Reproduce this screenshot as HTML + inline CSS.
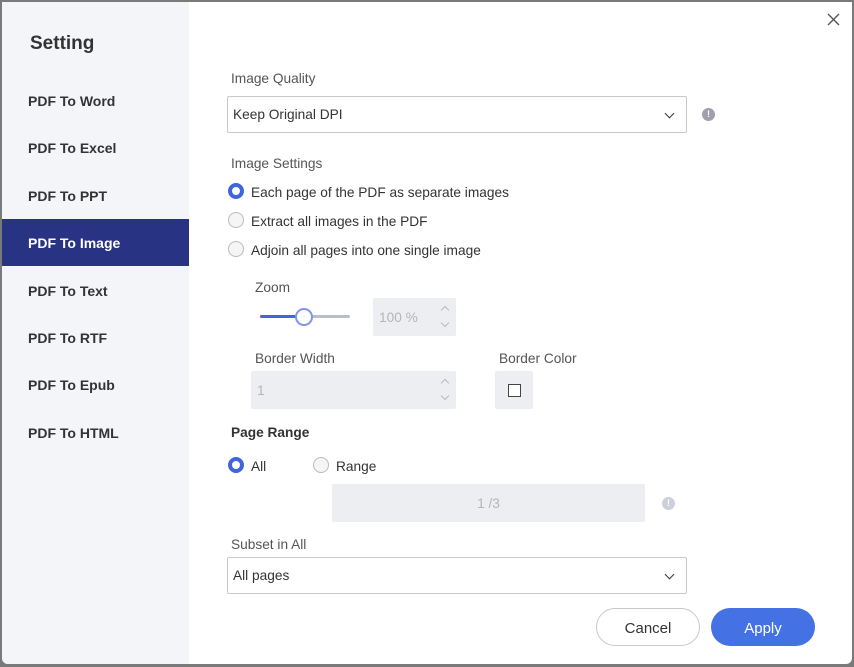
<!DOCTYPE html>
<html><head><style>
*{box-sizing:border-box;margin:0;padding:0}
body{width:854px;height:667px;background:#7a7a7a;font-family:"Liberation Sans",sans-serif;position:relative;overflow:hidden}
.win{position:absolute;left:2px;top:2px;width:850px;height:662px;background:#fff;border-radius:0 0 6px 6px;overflow:hidden}
.side{position:absolute;left:0;top:0;width:187px;height:662px;background:#f4f5f9}
.side h1{position:absolute;left:28px;top:31px;font-size:19px;font-weight:bold;color:#333}
.it{position:absolute;left:0;width:187px;height:47px;line-height:49px;padding-left:26px;font-size:14px;font-weight:bold;color:#333}
.it.on{background:#283483;color:#fff}
.a{position:absolute;font-size:13.7px;color:#333}
.lbl{color:#555}
.sel{position:absolute;border:1px solid #c9c9c9;border-radius:2px;background:#fff;font-size:13.7px;color:#333;padding-left:5px;line-height:36px}
.chev{position:absolute;right:13px;top:13px;width:7px;height:7px;border-right:1.5px solid #333;border-bottom:1.5px solid #333;transform:rotate(45deg)}
.r{position:absolute;width:16px;height:16px;border-radius:50%;border:1px solid #bbb;background:#f5f5f5}
.r.on{border:4px solid #3f66e0;background:#fff}
.box{position:absolute;background:#edeef1;border-radius:2px;color:#b5b5b5;font-size:13.7px}
.info{position:absolute;width:13px;height:13px;border-radius:50%;background:#9fa0ae;color:#fff;font-size:9px;font-weight:bold;text-align:center;line-height:13px}
.btn{position:absolute;height:38px;border-radius:19px;font-size:15px;text-align:center;line-height:40px}
.sp{position:absolute;right:8px;width:6px;height:6px;border-left:1px solid #bbb;border-top:1px solid #bbb}
</style></head><body>
<div class="win">
<div class="side">
<h1>Setting</h1>
<div class="it" style="top:75px">PDF To Word</div>
<div class="it" style="top:122px">PDF To Excel</div>
<div class="it" style="top:170px">PDF To PPT</div>
<div class="it on" style="top:217px">PDF To Image</div>
<div class="it" style="top:265px">PDF To Text</div>
<div class="it" style="top:312px">PDF To RTF</div>
<div class="it" style="top:359px">PDF To Epub</div>
<div class="it" style="top:407px">PDF To HTML</div>
</div>
<svg style="position:absolute;left:825px;top:11px" width="13" height="13" viewBox="0 0 13 13"><path d="M1 1L12 12M12 1L1 12" stroke="#555" stroke-width="1.4"/></svg>
<div class="a lbl" style="left:229px;top:69px">Image Quality</div>
<div class="sel" style="left:225px;top:94px;width:460px;height:37px">Keep Original DPI<div class="chev"></div></div>
<div class="info" style="left:700px;top:106px">!</div>
<div class="a lbl" style="left:229px;top:154px">Image Settings</div>
<div class="r on" style="left:226px;top:181px"></div><div class="a" style="left:249px;top:183px">Each page of the PDF as separate images</div>
<div class="r" style="left:226px;top:210px"></div><div class="a" style="left:249px;top:212px">Extract all images in the PDF</div>
<div class="r" style="left:226px;top:239px"></div><div class="a" style="left:249px;top:241px">Adjoin all pages into one single image</div>
<div class="a lbl" style="left:253px;top:278px">Zoom</div>
<div style="position:absolute;left:258px;top:313px;width:90px;height:3px;background:#bbbdc8;border-radius:2px"></div>
<div style="position:absolute;left:258px;top:313px;width:42px;height:3px;background:#3f66e0;border-radius:2px"></div>
<div style="position:absolute;left:293px;top:306px;width:18px;height:18px;border-radius:50%;background:#fff;border:2px solid #7f95e8"></div>
<div class="box" style="left:371px;top:296px;width:83px;height:38px"><span style="position:absolute;left:6px;top:12px">100 %</span><span class="sp" style="top:9px;transform:rotate(45deg)"></span><span class="sp" style="top:22px;transform:rotate(225deg)"></span></div>
<div class="a lbl" style="left:253px;top:349px">Border Width</div>
<div class="box" style="left:249px;top:369px;width:205px;height:38px"><span style="position:absolute;left:6px;top:12px">1</span><span class="sp" style="top:9px;transform:rotate(45deg)"></span><span class="sp" style="top:22px;transform:rotate(225deg)"></span></div>
<div class="a lbl" style="left:497px;top:349px">Border Color</div>
<div class="box" style="left:493px;top:369px;width:38px;height:38px"><div style="position:absolute;left:13px;top:13px;width:13px;height:13px;border:1.5px solid #444;background:#fff"></div></div>
<div class="a" style="left:229px;top:423px;font-weight:bold">Page Range</div>
<div class="r on" style="left:226px;top:455px"></div><div class="a" style="left:249px;top:457px">All</div>
<div class="r" style="left:311px;top:455px"></div><div class="a" style="left:334px;top:457px">Range</div>
<div class="box" style="left:330px;top:482px;width:313px;height:38px;text-align:center;line-height:40px">1 /3</div>
<div class="info" style="left:660px;top:495px;background:#cdd0dc">!</div>
<div class="a lbl" style="left:229px;top:535px">Subset in All</div>
<div class="sel" style="left:225px;top:555px;width:460px;height:37px">All pages<div class="chev"></div></div>
<div class="btn" style="left:594px;top:606px;width:104px;border:1px solid #c9c9c9;color:#333">Cancel</div>
<div class="btn" style="left:709px;top:606px;width:104px;background:#4472e5;color:#fff;line-height:42px">Apply</div>
</div>
</body></html>
